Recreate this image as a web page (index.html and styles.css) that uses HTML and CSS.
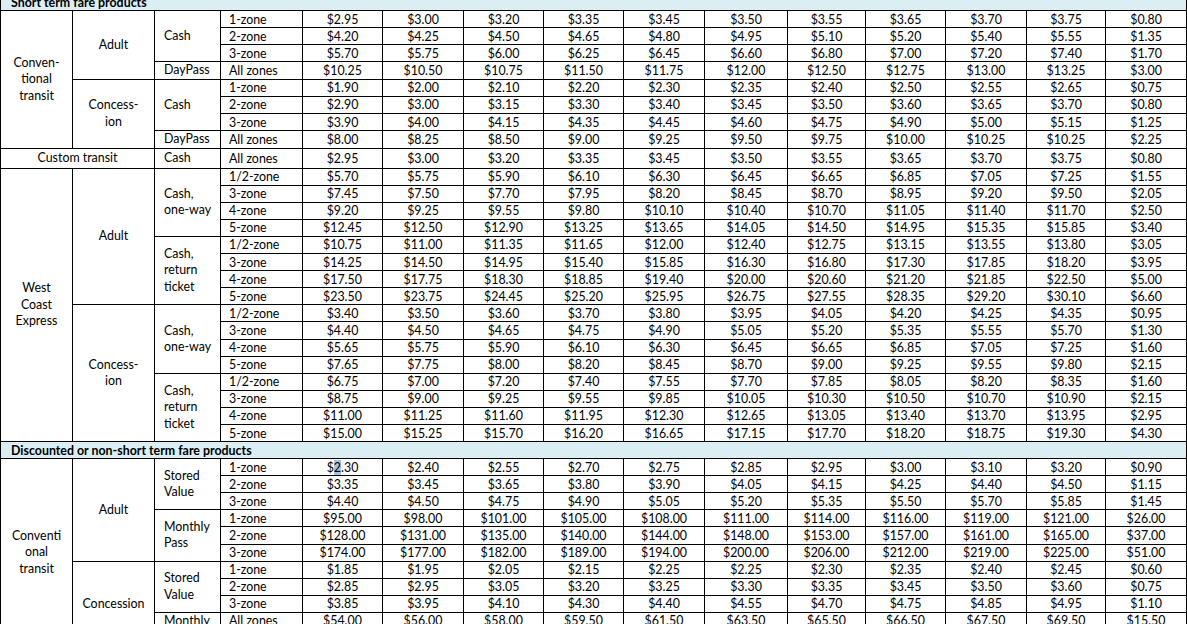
FILE: index.html
```html
<!DOCTYPE html>
<html lang="en">
<head>
<meta charset="utf-8">
<title>Fare products</title>
<link rel="stylesheet" href="styles.css">
</head>
<body>
<table class="fares">
<colgroup>
<col class="w-cat"><col class="w-grp"><col class="w-prod"><col class="w-zone">
<col class="w-p80"><col class="w-p81"><col class="w-p80"><col class="w-p80"><col class="w-p81"><col class="w-p83"><col class="w-p78"><col class="w-p80"><col class="w-p81"><col class="w-p79"><col class="w-p81">
</colgroup>
<tbody>
<tr class="sec"><td colspan="15" class="hdr">Short term fare products</td></tr>

<tr><td rowspan="8" class="cat">Conven-<br>tional<br>transit</td><td rowspan="4" class="grp">Adult</td><td rowspan="3" class="prod">Cash</td><td class="zone">1-zone</td><td>$2.95</td><td>$3.00</td><td>$3.20</td><td>$3.35</td><td>$3.45</td><td>$3.50</td><td>$3.55</td><td>$3.65</td><td>$3.70</td><td>$3.75</td><td>$0.80</td></tr>
<tr><td class="zone">2-zone</td><td>$4.20</td><td>$4.25</td><td>$4.50</td><td>$4.65</td><td>$4.80</td><td>$4.95</td><td>$5.10</td><td>$5.20</td><td>$5.40</td><td>$5.55</td><td>$1.35</td></tr>
<tr><td class="zone">3-zone</td><td>$5.70</td><td>$5.75</td><td>$6.00</td><td>$6.25</td><td>$6.45</td><td>$6.60</td><td>$6.80</td><td>$7.00</td><td>$7.20</td><td>$7.40</td><td>$1.70</td></tr>
<tr><td class="prod">DayPass</td><td class="zone">All zones</td><td>$10.25</td><td>$10.50</td><td>$10.75</td><td>$11.50</td><td>$11.75</td><td>$12.00</td><td>$12.50</td><td>$12.75</td><td>$13.00</td><td>$13.25</td><td>$3.00</td></tr>
<tr><td rowspan="4" class="grp">Concess-<br>ion</td><td rowspan="3" class="prod">Cash</td><td class="zone">1-zone</td><td>$1.90</td><td>$2.00</td><td>$2.10</td><td>$2.20</td><td>$2.30</td><td>$2.35</td><td>$2.40</td><td>$2.50</td><td>$2.55</td><td>$2.65</td><td>$0.75</td></tr>
<tr><td class="zone">2-zone</td><td>$2.90</td><td>$3.00</td><td>$3.15</td><td>$3.30</td><td>$3.40</td><td>$3.45</td><td>$3.50</td><td>$3.60</td><td>$3.65</td><td>$3.70</td><td>$0.80</td></tr>
<tr><td class="zone">3-zone</td><td>$3.90</td><td>$4.00</td><td>$4.15</td><td>$4.35</td><td>$4.45</td><td>$4.60</td><td>$4.75</td><td>$4.90</td><td>$5.00</td><td>$5.15</td><td>$1.25</td></tr>
<tr><td class="prod">DayPass</td><td class="zone">All zones</td><td>$8.00</td><td>$8.25</td><td>$8.50</td><td>$9.00</td><td>$9.25</td><td>$9.50</td><td>$9.75</td><td>$10.00</td><td>$10.25</td><td>$10.25</td><td>$2.25</td></tr>
<tr class="tall"><td colspan="2" class="cat">Custom transit</td><td class="prod">Cash</td><td class="zone">All zones</td><td>$2.95</td><td>$3.00</td><td>$3.20</td><td>$3.35</td><td>$3.45</td><td>$3.50</td><td>$3.55</td><td>$3.65</td><td>$3.70</td><td>$3.75</td><td>$0.80</td></tr>

<tr><td rowspan="16" class="cat">West<br>Coast<br>Express</td><td rowspan="8" class="grp">Adult</td><td rowspan="4" class="prod">Cash,<br>one-way</td><td class="zone">1/2-zone</td><td>$5.70</td><td>$5.75</td><td>$5.90</td><td>$6.10</td><td>$6.30</td><td>$6.45</td><td>$6.65</td><td>$6.85</td><td>$7.05</td><td>$7.25</td><td>$1.55</td></tr>
<tr><td class="zone">3-zone</td><td>$7.45</td><td>$7.50</td><td>$7.70</td><td>$7.95</td><td>$8.20</td><td>$8.45</td><td>$8.70</td><td>$8.95</td><td>$9.20</td><td>$9.50</td><td>$2.05</td></tr>
<tr><td class="zone">4-zone</td><td>$9.20</td><td>$9.25</td><td>$9.55</td><td>$9.80</td><td>$10.10</td><td>$10.40</td><td>$10.70</td><td>$11.05</td><td>$11.40</td><td>$11.70</td><td>$2.50</td></tr>
<tr><td class="zone">5-zone</td><td>$12.45</td><td>$12.50</td><td>$12.90</td><td>$13.25</td><td>$13.65</td><td>$14.05</td><td>$14.50</td><td>$14.95</td><td>$15.35</td><td>$15.85</td><td>$3.40</td></tr>
<tr><td rowspan="4" class="prod">Cash,<br>return<br>ticket</td><td class="zone">1/2-zone</td><td>$10.75</td><td>$11.00</td><td>$11.35</td><td>$11.65</td><td>$12.00</td><td>$12.40</td><td>$12.75</td><td>$13.15</td><td>$13.55</td><td>$13.80</td><td>$3.05</td></tr>
<tr><td class="zone">3-zone</td><td>$14.25</td><td>$14.50</td><td>$14.95</td><td>$15.40</td><td>$15.85</td><td>$16.30</td><td>$16.80</td><td>$17.30</td><td>$17.85</td><td>$18.20</td><td>$3.95</td></tr>
<tr><td class="zone">4-zone</td><td>$17.50</td><td>$17.75</td><td>$18.30</td><td>$18.85</td><td>$19.40</td><td>$20.00</td><td>$20.60</td><td>$21.20</td><td>$21.85</td><td>$22.50</td><td>$5.00</td></tr>
<tr><td class="zone">5-zone</td><td>$23.50</td><td>$23.75</td><td>$24.45</td><td>$25.20</td><td>$25.95</td><td>$26.75</td><td>$27.55</td><td>$28.35</td><td>$29.20</td><td>$30.10</td><td>$6.60</td></tr>
<tr><td rowspan="8" class="grp">Concess-<br>ion</td><td rowspan="4" class="prod">Cash,<br>one-way</td><td class="zone">1/2-zone</td><td>$3.40</td><td>$3.50</td><td>$3.60</td><td>$3.70</td><td>$3.80</td><td>$3.95</td><td>$4.05</td><td>$4.20</td><td>$4.25</td><td>$4.35</td><td>$0.95</td></tr>
<tr><td class="zone">3-zone</td><td>$4.40</td><td>$4.50</td><td>$4.65</td><td>$4.75</td><td>$4.90</td><td>$5.05</td><td>$5.20</td><td>$5.35</td><td>$5.55</td><td>$5.70</td><td>$1.30</td></tr>
<tr><td class="zone">4-zone</td><td>$5.65</td><td>$5.75</td><td>$5.90</td><td>$6.10</td><td>$6.30</td><td>$6.45</td><td>$6.65</td><td>$6.85</td><td>$7.05</td><td>$7.25</td><td>$1.60</td></tr>
<tr><td class="zone">5-zone</td><td>$7.65</td><td>$7.75</td><td>$8.00</td><td>$8.20</td><td>$8.45</td><td>$8.70</td><td>$9.00</td><td>$9.25</td><td>$9.55</td><td>$9.80</td><td>$2.15</td></tr>
<tr><td rowspan="4" class="prod">Cash,<br>return<br>ticket</td><td class="zone">1/2-zone</td><td>$6.75</td><td>$7.00</td><td>$7.20</td><td>$7.40</td><td>$7.55</td><td>$7.70</td><td>$7.85</td><td>$8.05</td><td>$8.20</td><td>$8.35</td><td>$1.60</td></tr>
<tr><td class="zone">3-zone</td><td>$8.75</td><td>$9.00</td><td>$9.25</td><td>$9.55</td><td>$9.85</td><td>$10.05</td><td>$10.30</td><td>$10.50</td><td>$10.70</td><td>$10.90</td><td>$2.15</td></tr>
<tr><td class="zone">4-zone</td><td>$11.00</td><td>$11.25</td><td>$11.60</td><td>$11.95</td><td>$12.30</td><td>$12.65</td><td>$13.05</td><td>$13.40</td><td>$13.70</td><td>$13.95</td><td>$2.95</td></tr>
<tr><td class="zone">5-zone</td><td>$15.00</td><td>$15.25</td><td>$15.70</td><td>$16.20</td><td>$16.65</td><td>$17.15</td><td>$17.70</td><td>$18.20</td><td>$18.75</td><td>$19.30</td><td>$4.30</td></tr>

<tr class="sec"><td colspan="15" class="hdr">Discounted or non-short term fare products</td></tr>

<tr><td rowspan="11" class="cat">Conventi<br>onal<br>transit</td><td rowspan="6" class="grp">Adult</td><td rowspan="3" class="prod">Stored<br>Value</td><td class="zone">1-zone</td><td>$<span class="sel">2</span>.30</td><td>$2.40</td><td>$2.55</td><td>$2.70</td><td>$2.75</td><td>$2.85</td><td>$2.95</td><td>$3.00</td><td>$3.10</td><td>$3.20</td><td>$0.90</td></tr>
<tr><td class="zone">2-zone</td><td>$3.35</td><td>$3.45</td><td>$3.65</td><td>$3.80</td><td>$3.90</td><td>$4.05</td><td>$4.15</td><td>$4.25</td><td>$4.40</td><td>$4.50</td><td>$1.15</td></tr>
<tr><td class="zone">3-zone</td><td>$4.40</td><td>$4.50</td><td>$4.75</td><td>$4.90</td><td>$5.05</td><td>$5.20</td><td>$5.35</td><td>$5.50</td><td>$5.70</td><td>$5.85</td><td>$1.45</td></tr>
<tr><td rowspan="3" class="prod">Monthly<br>Pass</td><td class="zone">1-zone</td><td>$95.00</td><td>$98.00</td><td>$101.00</td><td>$105.00</td><td>$108.00</td><td>$111.00</td><td>$114.00</td><td>$116.00</td><td>$119.00</td><td>$121.00</td><td>$26.00</td></tr>
<tr><td class="zone">2-zone</td><td>$128.00</td><td>$131.00</td><td>$135.00</td><td>$140.00</td><td>$144.00</td><td>$148.00</td><td>$153.00</td><td>$157.00</td><td>$161.00</td><td>$165.00</td><td>$37.00</td></tr>
<tr><td class="zone">3-zone</td><td>$174.00</td><td>$177.00</td><td>$182.00</td><td>$189.00</td><td>$194.00</td><td>$200.00</td><td>$206.00</td><td>$212.00</td><td>$219.00</td><td>$225.00</td><td>$51.00</td></tr>
<tr><td rowspan="5" class="grp">Concession</td><td rowspan="3" class="prod">Stored<br>Value</td><td class="zone">1-zone</td><td>$1.85</td><td>$1.95</td><td>$2.05</td><td>$2.15</td><td>$2.25</td><td>$2.25</td><td>$2.30</td><td>$2.35</td><td>$2.40</td><td>$2.45</td><td>$0.60</td></tr>
<tr><td class="zone">2-zone</td><td>$2.85</td><td>$2.95</td><td>$3.05</td><td>$3.20</td><td>$3.25</td><td>$3.30</td><td>$3.35</td><td>$3.45</td><td>$3.50</td><td>$3.60</td><td>$0.75</td></tr>
<tr><td class="zone">3-zone</td><td>$3.85</td><td>$3.95</td><td>$4.10</td><td>$4.30</td><td>$4.40</td><td>$4.55</td><td>$4.70</td><td>$4.75</td><td>$4.85</td><td>$4.95</td><td>$1.10</td></tr>
<tr><td rowspan="2" class="prod">Monthly<br>Pass</td><td class="zone">All zones</td><td>$54.00</td><td>$56.00</td><td>$58.00</td><td>$59.50</td><td>$61.50</td><td>$63.50</td><td>$65.50</td><td>$66.50</td><td>$67.50</td><td>$69.50</td><td>$15.50</td></tr>
<tr><td class="zone">&nbsp;</td><td></td><td></td><td></td><td></td><td></td><td></td><td></td><td></td><td></td><td></td><td></td></tr>
</tbody>
</table>
</body>
</html>
```

FILE: styles.css
```css
html, body {
  margin: 0;
  padding: 0;
  background: #ffffff;
}

.fares {
  border-collapse: collapse;
  table-layout: fixed;
  width: 1186px;
  margin-top: -7px;
  font-family: Lato, "Open Sans", sans-serif;
  font-size: 12.4px;
  color: #000000;
}

.w-cat { width: 72px; }
.w-grp { width: 82px; }
.w-prod { width: 66px; }
.w-zone { width: 82px; }
.w-p78 { width: 78px; }
.w-p79 { width: 79px; }
.w-p80 { width: 80px; }
.w-p81 { width: 81px; }
.w-p83 { width: 83px; }

.fares tr {
  height: 17.1px;
}

.fares tr.tall {
  height: 20px;
}

.fares tr.sec {
  height: 17px;
}

.fares td {
  border: 1px solid #000000;
  padding: 0 2px;
  text-align: center;
  vertical-align: middle;
  line-height: 15px;
  white-space: nowrap;
  overflow: hidden;
}

.fares td.hdr {
  background: #daeef3;
  font-weight: 700;
  text-align: left;
  padding-left: 10px;
}

.fares td.cat,
.fares td.grp {
  text-align: center;
  line-height: 16.5px;
}

.fares td.prod {
  text-align: left;
  padding-left: 9px;
  line-height: 16.5px;
}

.fares td.zone {
  text-align: left;
  padding-left: 8px;
}

.sel {
  background: #a9c3de;
}
```
